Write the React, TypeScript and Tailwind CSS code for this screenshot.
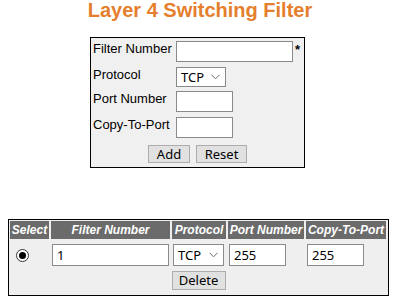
import React from "react";

const LBL = "font-['Liberation_Sans',Arial,sans-serif]";
const CTL = "font-['Noto_Sans',sans-serif]";

function Chevron() {
  return (
    <svg width="9" height="6" viewBox="0 0 9 6" className="shrink-0">
      <path d="M0.5 0.8 L4.5 4.8 L8.5 0.8" fill="none" stroke="#6b6b6b" strokeWidth="1" />
    </svg>
  );
}

function Select({ w, h }: { w: string; h: string }) {
  return (
    <div
      className={`${w} ${h} ${CTL} flex items-center justify-between bg-white border border-[#8a8a8a] pl-[4px] pr-[5px] text-[13px] text-black leading-none`}
    >
      <span>TCP</span>
      <Chevron />
    </div>
  );
}

function Input({ w, h, value }: { w: string; h: string; value?: string }) {
  return (
    <div
      className={`${w} ${h} ${CTL} flex items-center bg-white border border-[#8a8a8a] pl-[4px] text-[13px] text-black leading-none`}
    >
      {value}
    </div>
  );
}

function Btn({ w, h, label }: { w: string; h: string; label: string }) {
  return (
    <div
      className={`${w} ${h} ${CTL} flex items-center justify-center bg-[#e1e1e1] border border-[#adadad] text-[13px] text-black leading-none`}
    >
      {label}
    </div>
  );
}

export default function App() {
  return (
    <div className="w-[399px] h-[302px] bg-white overflow-hidden">
      <div
        className={`${LBL} text-center text-[20px] leading-[20px] font-bold text-[#e57f2e] pl-[1px]`}
      >
        Layer 4 Switching Filter
      </div>

      {/* top form box */}
      <div className="ml-[90px] mt-[17px] w-[215px] border border-black bg-[#f0f0f0] pt-[3px] pb-[4px] pl-[2px]">
        <div className="flex items-center h-[21px]">
          <div className={`${LBL} w-[83px] text-[13px] leading-[15px] text-black pb-[6px]`}>Filter Number</div>
          <Input w="w-[117px]" h="h-[21px]" />
          <span className={`${LBL} self-start mt-[1px] ml-[2px] text-[13px] font-bold leading-[15px] text-black`}>*</span>
        </div>
        <div className="flex items-center h-[20px] mt-[5px]">
          <div className={`${LBL} w-[83px] text-[13px] leading-[15px] text-black pb-[6px]`}>Protocol</div>
          <Select w="w-[50px]" h="h-[20px]" />
        </div>
        <div className="flex items-center h-[21px] mt-[4px]">
          <div className={`${LBL} w-[83px] text-[13px] leading-[15px] text-black pb-[6px]`}>Port Number</div>
          <Input w="w-[57px]" h="h-[21px]" />
        </div>
        <div className="flex items-center h-[21px] mt-[5px]">
          <div className={`${LBL} w-[83px] text-[13px] leading-[15px] text-black pb-[6px]`}>Copy-To-Port</div>
          <Input w="w-[57px]" h="h-[21px]" />
        </div>
        <div className="flex justify-center gap-[6px] mt-[7px] pr-[2px]">
          <Btn w="w-[42px]" h="h-[18px]" label="Add" />
          <Btn w="w-[51px]" h="h-[18px]" label="Reset" />
        </div>
      </div>

      {/* bottom table */}
      <div className="ml-[8px] mt-[51px] w-[381px] border border-black bg-[#efefef] pt-[1px] pb-[5px] pl-[1px] pr-[2px]">
        <div
          className={`${LBL} flex gap-[2px] h-[18px] text-white text-[12px] font-bold italic leading-none`}
        >
          <div className="w-[39px] bg-[#6b6b6b] flex items-center justify-center">Select</div>
          <div className="w-[119px] bg-[#6b6b6b] flex items-center justify-center">Filter Number</div>
          <div className="w-[54px] bg-[#6b6b6b] flex items-center justify-center">Protocol</div>
          <div className="w-[76px] bg-[#6b6b6b] flex items-center justify-center">Port Number</div>
          <div className="w-[80px] bg-[#6b6b6b] flex items-center justify-center">Copy-To-Port</div>
        </div>
        <div className="flex gap-[2px] h-[28px] mt-[2px] items-center">
          <div className="w-[39px] flex items-center pl-[6px]">
            <div className="w-[13px] h-[13px] rounded-full border border-[#333] bg-white flex items-center justify-center">
              <div className="w-[7px] h-[7px] rounded-full bg-black" />
            </div>
          </div>
          <div className="w-[119px] pl-[1px]">
            <Input w="w-[117px]" h="h-[22px]" value="1" />
          </div>
          <div className="w-[54px] pl-[1px]">
            <Select w="w-[51px]" h="h-[22px]" />
          </div>
          <div className="w-[76px] pl-[1px]">
            <Input w="w-[57px]" h="h-[22px]" value="255" />
          </div>
          <div className="w-[80px] pl-[1px]">
            <Input w="w-[57px]" h="h-[22px]" value="255" />
          </div>
        </div>
        <div className="flex justify-center mt-[2px] pl-[1px]">
          <Btn w="w-[54px]" h="h-[19px]" label="Delete" />
        </div>
      </div>
    </div>
  );
}
